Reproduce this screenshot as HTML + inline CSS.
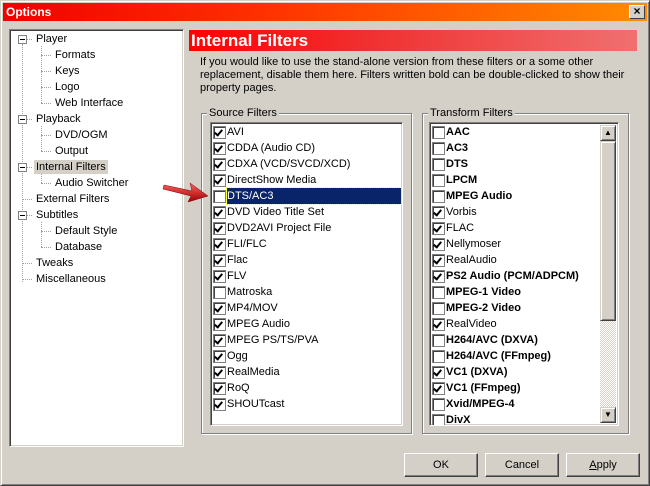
<!DOCTYPE html>
<html><head><style>
*{margin:0;padding:0;box-sizing:border-box}
body{width:650px;height:486px;overflow:hidden;background:#d4d0c8;font-family:"Liberation Sans",sans-serif;font-size:11px;color:#000;position:relative}
.a{position:absolute}
.win{left:0;top:0;width:650px;height:486px;border:1px solid;border-color:#d4d0c8 #404040 #404040 #d4d0c8;box-shadow:inset 1px 1px #fff,inset -1px -1px #808080}
.title{left:3px;top:3px;width:644px;height:18px;background:linear-gradient(90deg,#f00000 0%,#ff3000 40%,#ff8c00 100%);color:#fff;font-weight:bold;font-size:12px;line-height:18px;padding-left:3px}
.xb{right:5px;top:5px;width:16px;height:14px;background:#d4d0c8;border:1px solid;border-color:#fff #404040 #404040 #fff;font-size:12px;line-height:11px;text-align:center;font-weight:bold;color:#000}
.sunk{border:1px solid;border-color:#808080 #fff #fff #808080;box-shadow:inset 1px 1px #404040,inset -1px -1px #d4d0c8;background:#fff}
.t{position:absolute;white-space:nowrap;line-height:14px;height:14px}
.pm{position:absolute;width:9px;height:9px;border:1px solid #808080;background:#fff}
.pm:after{content:"";position:absolute;left:1px;top:3px;width:5px;height:1px;background:#000}
.dv{position:absolute;border-left:1px dotted #a0a0a0}
.dh{position:absolute;border-top:1px dotted #a0a0a0;height:0}
.grp{border:1px solid #808080;box-shadow:1px 1px #fff,inset 1px 1px #fff}
.gl{background:#d4d0c8;padding:0 2px;line-height:12px}
.cb{position:absolute;width:13px;height:13px;border:1px solid #808080;background:#fff;box-shadow:inset 1px 1px #404040}
.ck:after{content:"";position:absolute;left:2px;top:1px;width:3px;height:6px;border:solid #000;border-width:0 2px 2px 0;transform:rotate(40deg)}
.btn{position:absolute;top:453px;width:74px;height:24px;background:#d4d0c8;border:1px solid;border-color:#fff #404040 #404040 #fff;box-shadow:inset -1px -1px #808080;text-align:center;line-height:22px}
.sb{position:absolute;width:16px;height:16px;background:#d4d0c8;border:1px solid;border-color:#d4d0c8 #404040 #404040 #d4d0c8;box-shadow:inset 1px 1px #fff,inset -1px -1px #808080}
</style></head><body>
<div class="a win"></div>
<div class="a title">Options</div>
<div class="a xb">×</div>

<div class="a sunk" style="left:9px;top:29px;width:175px;height:418px"></div>
<div class="dv" style="left:22px;top:44px;height:238px"></div>
<div class="dv" style="left:41px;top:46px;height:57px"></div>
<div class="dv" style="left:41px;top:126px;height:25px"></div>
<div class="dv" style="left:41px;top:174px;height:9px"></div>
<div class="dv" style="left:41px;top:222px;height:25px"></div>
<div id="tree"></div>

<div class="a" style="left:189px;top:30px;width:448px;height:21px;background:linear-gradient(90deg,#ff0000 0%,#f03030 40%,#f07070 100%);color:#fff;font-weight:bold;font-size:17px;line-height:21px;padding-left:2px">Internal Filters</div>
<div class="a" style="left:200px;top:56px;width:430px;line-height:13px">If you would like to use the stand-alone version from these filters or a some other replacement, disable them here. Filters written bold can be double-clicked to show their property pages.</div>

<div class="a grp" style="left:201px;top:113px;width:211px;height:321px"></div>
<div class="a gl" style="left:207px;top:107px">Source Filters</div>
<div class="a sunk" style="left:210px;top:122px;width:193px;height:304px;overflow:hidden" id="src"></div>

<div class="a grp" style="left:422px;top:113px;width:207px;height:321px"></div>
<div class="a gl" style="left:428px;top:107px">Transform Filters</div>
<div class="a sunk" style="left:429px;top:122px;width:190px;height:304px;overflow:hidden" id="trf"></div>

<svg class="a" style="left:162px;top:180px" width="48" height="24" viewBox="0 0 48 24"><defs><linearGradient id="g" x1="0" y1="0" x2="0" y2="1"><stop offset="0" stop-color="#ff6060"/><stop offset="1" stop-color="#a00000"/></linearGradient></defs><path d="M2 5 L30 11 L28 3 L46 16 L26 22 L29 16 L1 9 Z" fill="url(#g)" stroke="#800000" stroke-width=".5"/></svg>

<div class="btn" style="left:404px">OK</div>
<div class="btn" style="left:485px">Cancel</div>
<div class="btn" style="left:566px"><u>A</u>pply</div>

<script>
var tr=[["Player",1,1],["Formats",2],["Keys",2],["Logo",2],["Web Interface",2],["Playback",1,1],["DVD/OGM",2],["Output",2],["Internal Filters",1,1,1],["Audio Switcher",2],["External Filters",1],["Subtitles",1,1],["Default Style",2],["Database",2],["Tweaks",1],["Miscellaneous",1]];
var h="";tr.forEach(function(e,i){var y=32+i*16;var x=e[1]==1?34:53;
if(e[2])h+='<div class="pm" style="left:18px;top:'+(y+3)+'px"></div>';
h+='<div class="dh" style="left:'+(e[1]==1?(e[2]?27:22):41)+'px;top:'+(y+7)+'px;width:'+(e[1]==1?(e[2]?5:10):10)+'px"></div>';
h+='<div class="t" style="left:'+x+'px;top:'+y+'px;padding:0 2px;'+(e[3]?'background:#d4d0c8':'')+'">'+e[0]+'</div>';});
document.getElementById("tree").innerHTML=h;
var s=[["AVI",1],["CDDA (Audio CD)",1],["CDXA (VCD/SVCD/XCD)",1],["DirectShow Media",1],["DTS/AC3",0,1],["DVD Video Title Set",1],["DVD2AVI Project File",1],["FLI/FLC",1],["Flac",1],["FLV",1],["Matroska",0],["MP4/MOV",1],["MPEG Audio",1],["MPEG PS/TS/PVA",1],["Ogg",1],["RealMedia",1],["RoQ",1],["SHOUTcast",1]];
h="";s.forEach(function(e,i){var y=2+i*16;h+='<div class="cb'+(e[1]?' ck':'')+'" style="left:2px;top:'+(y+1)+'px"></div>';
h+='<div class="t" style="left:16px;top:'+y+'px;'+(e[2]?'width:174px;height:16px;top:'+(y-1)+'px;line-height:16px;background:#0a246a;color:#fff;outline:1px dotted #ff0':'')+'">'+e[0]+'</div>';});
document.getElementById("src").innerHTML=h;
var t=[["AAC",0,1],["AC3",0,1],["DTS",0,1],["LPCM",0,1],["MPEG Audio",0,1],["Vorbis",1],["FLAC",1],["Nellymoser",1],["RealAudio",1],["PS2 Audio (PCM/ADPCM)",1,1],["MPEG-1 Video",0,1],["MPEG-2 Video",0,1],["RealVideo",1],["H264/AVC (DXVA)",0,1],["H264/AVC (FFmpeg)",0,1],["VC1 (DXVA)",1,1],["VC1 (FFmpeg)",1,1],["Xvid/MPEG-4",0,1],["DivX",0,1]];
h="";t.forEach(function(e,i){var y=2+i*16;h+='<div class="cb'+(e[1]?' ck':'')+'" style="left:2px;top:'+(y+1)+'px"></div>';
h+='<div class="t" style="left:16px;top:'+y+'px;'+(e[2]?'font-weight:bold':'')+'">'+e[0]+'</div>';});
h+='<div class="a" style="left:170px;top:2px;width:16px;height:298px;background:repeating-conic-gradient(#fff 0 25%,#d4d0c8 0 50%) 0 0/2px 2px"></div>';
h+='<div class="sb" style="left:170px;top:2px;text-align:center;font-size:8px;line-height:13px">▲</div>';
h+='<div class="sb" style="left:170px;top:18px;height:180px"></div>';
h+='<div class="sb" style="left:170px;top:284px;text-align:center;font-size:8px;line-height:14px">▼</div>';
document.getElementById("trf").innerHTML=h;
</script>
</body></html>
